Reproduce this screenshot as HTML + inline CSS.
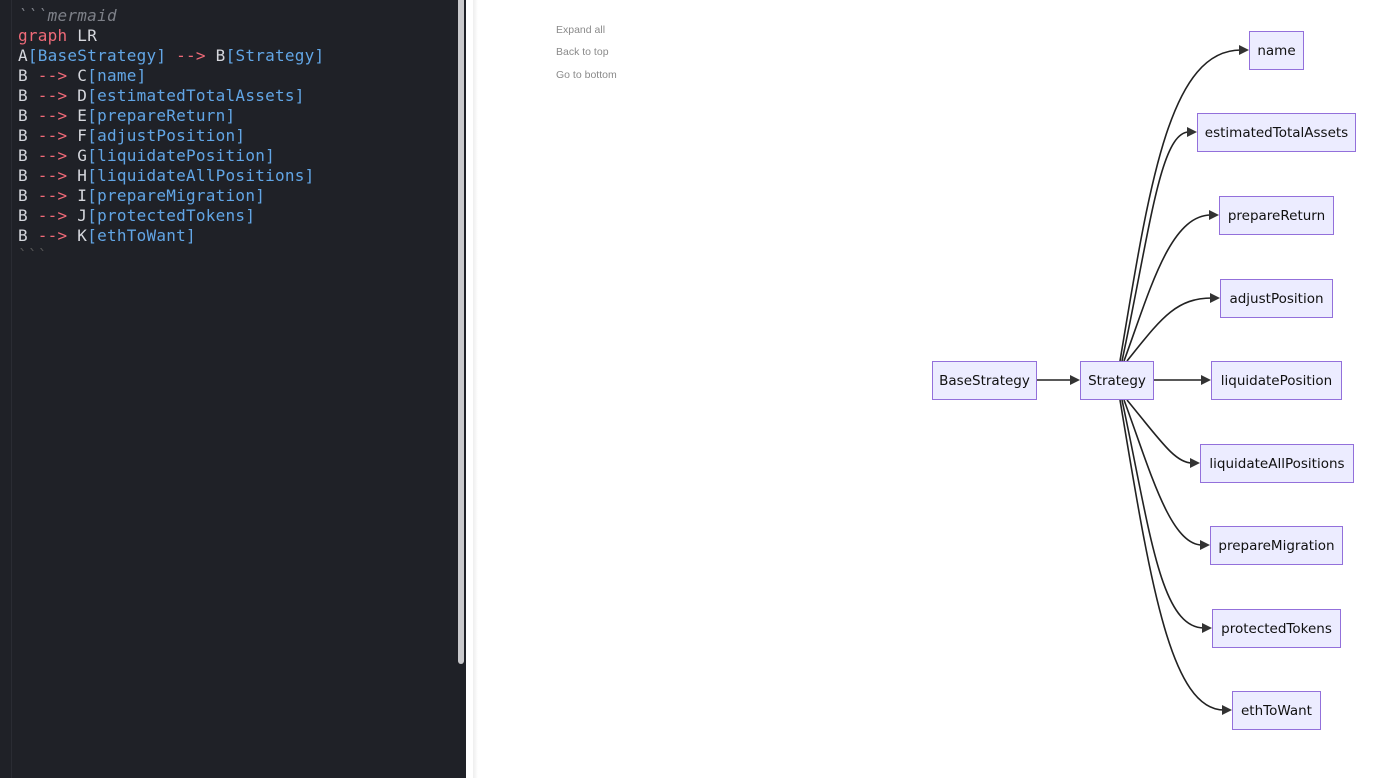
<!DOCTYPE html>
<html><head><style>
body{margin:0;width:1400px;height:778px;overflow:hidden;background:#fff;font-family:"Liberation Sans",sans-serif;position:relative}
#ed{position:absolute;left:0;top:0;width:466px;height:778px;background:#1f2127}
#gut{position:absolute;left:11px;top:0;width:1px;height:778px;background:#2a2c33}
#code{position:absolute;left:18px;top:6px;font-family:"DejaVu Sans Mono","Liberation Mono",monospace;font-size:16px;line-height:20px;color:#d6d8de;white-space:pre;letter-spacing:0.25px}
.r{color:#ef6a78}.b{color:#62a6e6}.c{color:#7d8088;font-style:italic}
#sb{position:absolute;left:458px;top:0;width:6px;height:664px;background:#c9c9cc;border-radius:0 0 3px 3px}
#sh{position:absolute;left:473px;top:0;width:5px;height:778px;background:linear-gradient(90deg,#eee,#fff)}
.lk{position:absolute;left:556px;font-size:10.5px;color:#8a8a8a}
</style></head><body>
<div id="ed"></div>
<div id="gut"></div>
<div id="code"><span class="c">&#96;&#96;&#96;mermaid</span>
<span class="r">graph</span> LR
A<span class="b">[BaseStrategy]</span> <span class="r">&#45;&#45;&gt;</span> B<span class="b">[Strategy]</span>
B <span class="r">&#45;&#45;&gt;</span> C<span class="b">[name]</span>
B <span class="r">&#45;&#45;&gt;</span> D<span class="b">[estimatedTotalAssets]</span>
B <span class="r">&#45;&#45;&gt;</span> E<span class="b">[prepareReturn]</span>
B <span class="r">&#45;&#45;&gt;</span> F<span class="b">[adjustPosition]</span>
B <span class="r">&#45;&#45;&gt;</span> G<span class="b">[liquidatePosition]</span>
B <span class="r">&#45;&#45;&gt;</span> H<span class="b">[liquidateAllPositions]</span>
B <span class="r">&#45;&#45;&gt;</span> I<span class="b">[prepareMigration]</span>
B <span class="r">&#45;&#45;&gt;</span> J<span class="b">[protectedTokens]</span>
B <span class="r">&#45;&#45;&gt;</span> K<span class="b">[ethToWant]</span>
<span style="color:#555">&#96;&#96;&#96;</span></div>
<div id="sb"></div>
<div id="sh"></div>
<div class="lk" style="top:24px">Expand all</div>
<div class="lk" style="top:46px">Back to top</div>
<div class="lk" style="top:69px">Go to bottom</div>
<svg width="1400" height="778" style="position:absolute;left:0;top:0">
<g fill="none" stroke="#222" stroke-width="1.6">
<path d="M1037,380H1072"/>
<path d="M1154,380H1203"/>
<path d="M1120,361C1150,180 1170,50 1241,50"/>
<path d="M1122,361C1150,230 1160,132 1189,132"/>
<path d="M1124,361C1150,290 1170,215 1211,215"/>
<path d="M1127,361C1160,320 1175,298 1212,298"/>
<path d="M1127,400C1160,440 1175,463 1192,463"/>
<path d="M1124,400C1150,470 1170,545 1202,545"/>
<path d="M1122,400C1150,530 1160,628 1204,628"/>
<path d="M1120,400C1150,580 1170,710 1224,710"/>
</g>
<g fill="#333">
<path d="M1070,375L1080,380L1070,385z"/>
<path d="M1201,375L1211,380L1201,385z"/>
<path d="M1239,45L1249,50L1239,55z"/>
<path d="M1187,127L1197,132L1187,137z"/>
<path d="M1209,210L1219,215L1209,220z"/>
<path d="M1210,293L1220,298L1210,303z"/>
<path d="M1190,458L1200,463L1190,468z"/>
<path d="M1200,540L1210,545L1200,550z"/>
<path d="M1202,623L1212,628L1202,633z"/>
<path d="M1222,705L1232,710L1222,715z"/>
</g>
<g fill="#ececff" stroke="#9370db" stroke-width="1">
<rect x="932.5" y="361.5" width="104" height="38"/><rect x="1080.5" y="361.5" width="73" height="38"/>
<rect x="1249.5" y="31.5" width="54" height="38"/><rect x="1197.5" y="113.5" width="158" height="38"/>
<rect x="1219.5" y="196.5" width="114" height="38"/><rect x="1220.5" y="279.5" width="112" height="38"/>
<rect x="1211.5" y="361.5" width="130" height="38"/><rect x="1200.5" y="444.5" width="153" height="38"/>
<rect x="1210.5" y="526.5" width="132" height="38"/><rect x="1212.5" y="609.5" width="128" height="38"/>
<rect x="1232.5" y="691.5" width="88" height="38"/>
</g>
<g font-family="DejaVu Sans,Liberation Sans,sans-serif" font-size="13.5" fill="#111" text-anchor="middle">
<text x="984.5" y="385">BaseStrategy</text><text x="1117" y="385">Strategy</text>
<text x="1276.5" y="55">name</text><text x="1276.5" y="137">estimatedTotalAssets</text>
<text x="1276.5" y="220">prepareReturn</text><text x="1276.5" y="303">adjustPosition</text>
<text x="1276.5" y="385">liquidatePosition</text><text x="1277" y="468">liquidateAllPositions</text>
<text x="1276.5" y="550">prepareMigration</text><text x="1276.5" y="633">protectedTokens</text>
<text x="1276.5" y="715">ethToWant</text>
</g></svg>
</body></html>
